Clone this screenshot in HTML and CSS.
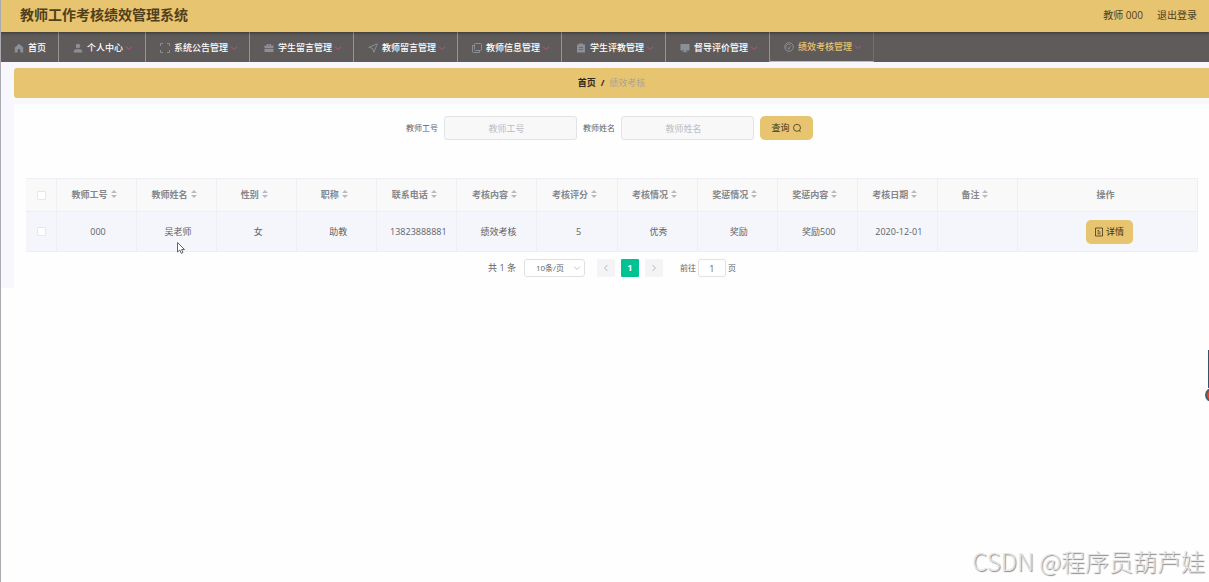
FILE: index.html
```html
<!DOCTYPE html>
<html lang="zh-CN">
<head>
<meta charset="utf-8">
<title>教师工作考核绩效管理系统</title>
<link rel="stylesheet" href="styles.css">
</head>
<body>
<svg class="sprite" aria-hidden="true">
  <symbol id="chevron" viewBox="0 0 10 10"><path d="M2 3.500 5 6.500 8 3.500" fill="none" stroke="currentColor"/></symbol>
  <symbol id="sort" viewBox="0 0 8 10"><path d="M4 1 7 4H1zM4 9 1 6h6z" fill="currentColor"/></symbol>
</svg>
<div class="app">
  <header class="topbar">
    <h1 class="title">教师工作考核绩效管理系统</h1>
    <div class="account"><span>教师 000</span><a href="#" class="logout">退出登录</a></div>
  </header>
  <nav class="nav">
    <a href="#" class="nav-item home"><svg class="icon" viewBox="0 0 10 10"><path d="M5 .8.8 4.600V9.500H3.700V6.300h2.600V9.500H9.200V4.600z" fill="currentColor"/></svg>首页</a>
    <a href="#" class="nav-item personal"><svg class="icon" viewBox="0 0 10 10"><circle cx="5" cy="3" r="2.300" fill="currentColor"/><path d="M.8 9.500V8Q1 6.200 3 6.200H7Q9 6.200 9.200 8V9.500z" fill="currentColor"/></svg>个人中心<svg class="arrow"><use href="#chevron"/></svg></a>
    <a href="#" class="nav-item"><svg class="icon" viewBox="0 0 10 10"><path d="M.5 3V.5H3M7 .5H9.500V3M9.500 7V9.500H7M3 9.500H.5V7" fill="none" stroke="currentColor"/></svg>系统公告管理<svg class="arrow"><use href="#chevron"/></svg></a>
    <a href="#" class="nav-item"><svg class="icon" viewBox="0 0 10 10"><path d="M.5 5V2.500H3V1H7V2.500H9.500V5zM4 2.500H6V1.800H4zM.5 5.800H9.500V9H.5z" fill="currentColor"/></svg>学生留言管理<svg class="arrow"><use href="#chevron"/></svg></a>
    <a href="#" class="nav-item"><svg class="icon" viewBox="0 0 10 10"><path d="M.8 4.300 9.300.8 5.800 9.300 4.600 5.400z" fill="none" stroke="currentColor"/></svg>教师留言管理<svg class="arrow"><use href="#chevron"/></svg></a>
    <a href="#" class="nav-item"><svg class="icon" viewBox="0 0 10 10"><rect x="2.500" y=".5" width="7" height="7" rx="1" fill="none" stroke="currentColor"/><path d="M2.500 2.500H.5V8.500Q.5 9.500 1.500 9.500H7.500V7.500" fill="none" stroke="currentColor"/></svg>教师信息管理<svg class="arrow"><use href="#chevron"/></svg></a>
    <a href="#" class="nav-item"><svg class="icon" viewBox="0 0 10 10"><path d="M1 1.500H3V.5H7V1.500H9V9.500H1z" fill="currentColor"/><path d="M3 4.500H7M3 6.500H7" stroke="#5e5b5a" stroke-width=".7"/></svg>学生评教管理<svg class="arrow"><use href="#chevron"/></svg></a>
    <a href="#" class="nav-item"><svg class="icon" viewBox="0 0 10 10"><path d="M.5 1H9.500V7.500H6V8.500H7.500V9.300H2.500V8.500H4V7.500H.5z" fill="currentColor"/></svg>督导评价管理<svg class="arrow"><use href="#chevron"/></svg></a>
    <a href="#" class="nav-item active" aria-current="page"><svg class="icon" viewBox="0 0 10 10"><circle cx="5" cy="5" r="4.300" fill="none" stroke="currentColor"/><path d="M2.500 6.500A2.700 2.700 0 0 1 6 2.600M5 6.500 7 3.500" fill="none" stroke="currentColor" stroke-width=".8"/><circle cx="4.800" cy="6.500" r=".9" fill="currentColor"/></svg>绩效考核管理<svg class="arrow"><use href="#chevron"/></svg></a>
  </nav>
  <main class="main">
    <div class="crumbs"><a href="#">首页</a><b>/</b><span>绩效考核</span></div>
    <section class="panel">
      <form class="search">
        <label for="no">教师工号</label><input id="no" type="text" placeholder="教师工号">
        <label for="name">教师姓名</label><input id="name" type="text" placeholder="教师姓名">
        <button type="button" class="btn query">查询<svg class="btn-icon" viewBox="0 0 10 10"><circle cx="5" cy="4.800" r="3.500" fill="none" stroke="currentColor" stroke-width=".8"/><path d="M7.300 7.500 8.500 9" stroke="currentColor" stroke-width=".8"/></svg></button>
      </form>
      <table class="grid">
        <colgroup><col class="c-check"><col span="12"><col class="c-action"></colgroup>
        <thead><tr>
          <th><input type="checkbox" aria-label="全选"></th>
          <th>教师工号<svg class="sort"><use href="#sort"/></svg></th>
          <th>教师姓名<svg class="sort"><use href="#sort"/></svg></th>
          <th>性别<svg class="sort"><use href="#sort"/></svg></th>
          <th>职称<svg class="sort"><use href="#sort"/></svg></th>
          <th>联系电话<svg class="sort"><use href="#sort"/></svg></th>
          <th>考核内容<svg class="sort"><use href="#sort"/></svg></th>
          <th>考核评分<svg class="sort"><use href="#sort"/></svg></th>
          <th>考核情况<svg class="sort"><use href="#sort"/></svg></th>
          <th>奖惩情况<svg class="sort"><use href="#sort"/></svg></th>
          <th>奖惩内容<svg class="sort"><use href="#sort"/></svg></th>
          <th>考核日期<svg class="sort"><use href="#sort"/></svg></th>
          <th>备注<svg class="sort"><use href="#sort"/></svg></th>
          <th>操作</th>
        </tr></thead>
        <tbody><tr>
          <td><input type="checkbox" aria-label="选择"></td>
          <td>000</td><td>吴老师</td><td>女</td><td>助教</td><td>13823888881</td><td>绩效考核</td><td>5</td><td>优秀</td><td>奖励</td><td>奖励500</td><td>2020-12-01</td><td></td>
          <td><button type="button" class="btn detail"><svg class="btn-icon" viewBox="0 0 10 10"><path d="M1.500 1H8.500V9H1.500zM3.500 3.500H5M3.500 5H6.500M3.500 6.800H6.500" fill="none" stroke="currentColor" stroke-width=".8"/></svg>详情</button></td>
        </tr></tbody>
      </table>
      <div class="pager">
        <span class="total">共 1 条</span>
        <span class="size"><select aria-label="每页条数"><option>10条/页</option></select><svg class="size-arrow"><use href="#chevron"/></svg></span>
        <span class="pages">
          <button type="button" aria-label="上一页" disabled><svg viewBox="0 0 10 10"><path d="M6.500 2 3.500 5 6.500 8" fill="none" stroke="currentColor"/></svg></button>
          <button type="button" class="current">1</button>
          <button type="button" aria-label="下一页" disabled><svg viewBox="0 0 10 10"><path d="M3.500 2 6.500 5 3.500 8" fill="none" stroke="currentColor"/></svg></button>
        </span>
        <label class="jump">前往<input type="text" value="1">页</label>
      </div>
    </section>
  </main>
  <svg class="cursor" viewBox="0 0 8 12"><path d="M.5.500V10L2.800 8 4.300 11.300 6 10.600 4.600 7.500H7.500z" fill="#fff" stroke="#555" stroke-width=".9"/></svg>
  <div class="widget"></div>
  <div class="watermark">CSDN @程序员葫芦娃</div>
</div>
</body>
</html>
```
FILE: styles.css
```css
* { box-sizing: border-box; }
body {
  margin: 0;
  background: #fefefe;
  color: #606266;
  font: 9px/12px "Open Sans", "Noto Sans CJK SC", sans-serif;
}
a { color: inherit; text-decoration: none; }
button, input, select { font: inherit; color: inherit; margin: 0; padding: 0; }
.sprite { display: none; }
svg { flex: none; }
.app {
  position: relative;
  min-height: 100vh;
  overflow: hidden;
  border-left: 1px solid #aaabb0;
}

.topbar {
  position: relative;
  display: flex;
  align-items: center;
  justify-content: space-between;
  height: 32px;
  margin-left: -1px;
  padding: 0 12px 2px 20px;
  background: #e7c470;
  box-shadow: 0 1px 3px rgba(0, 0, 0, .4);
  color: #50401c;
}
.title { margin: 0; font-size: 14px; line-height: 20px; font-weight: 700; }
.account { display: flex; gap: 14px; font-size: 10px; }

.nav {
  display: flex;
  height: 30px;
  margin-left: -1px;
  background: #5e5b5a;
  color: #fff;
}
.nav-item {
  display: flex;
  align-items: center;
  width: 104px;
  padding: 2px 0 0 14px;
  border-right: 1px solid #96948f;
  white-space: nowrap;
  font-weight: 500;
}
.nav-item.home { width: 59px; }
.nav-item.personal { width: 87px; }
.icon { width: 10px; height: 10px; margin-right: 4px; color: #8d8f96; }
.arrow { width: 10px; height: 10px; margin-left: 1px; color: #c2508e; }
.nav-item.active {
  padding-top: 1px;
  border-bottom: 1px solid #eab65c;
  border-right-color: #74716f;
  color: #e7c470;
}

.main { padding: 6px 0 0 13px; background: #f7f7fd; }
.crumbs {
  display: flex;
  align-items: center;
  justify-content: center;
  gap: 5px;
  height: 30px;
  border-radius: 3px 0 0 3px;
  background: #e7c470;
  color: #aaa596;
}
.crumbs a, .crumbs b { color: #302a1c; font-weight: 700; }
.panel { margin-top: 6px; padding: 12px 11px 11px 12px; background: #fefefe; }

.search {
  display: flex;
  align-items: center;
  justify-content: center;
  padding-right: 5px;
  font-size: 8px;
}
.search input {
  width: 133px;
  height: 24px;
  margin: 0 6px;
  padding-right: 8px;
  border: 1px solid #e3e3e6;
  border-radius: 3px;
  background: #f8f8f8;
  text-align: center;
  font-size: 9px;
}
.search input::placeholder { color: #bcbcc4; }
.btn {
  display: inline-flex;
  align-items: center;
  justify-content: center;
  gap: 2px;
  height: 24px;
  border: 0;
  border-radius: 5px;
  background: #e7c470;
  color: #40351b;
  font-size: 9px;
}
.btn-icon { width: 10px; height: 10px; }
.query { width: 53px; }
.detail { width: 47px; }

.grid {
  width: 100%;
  margin-top: 38px;
  table-layout: fixed;
  border-collapse: separate;
  border-spacing: 0;
}
.c-check { width: 31px; }
.c-action { width: 180px; }
.grid th, .grid td {
  padding: 0;
  border-right: 1px solid #eeeef4;
  border-bottom: 1px solid #eeeef4;
  text-align: center;
  vertical-align: middle;
}
.grid th {
  height: 34px;
  border-top: 1px solid #eeeef4;
  background: #f9f9f9;
  color: #85878d;
  font-weight: 700;
  padding-right: 4px;
}
.grid th:first-child { padding-right: 0; }
.grid td { height: 40px; padding-left: 3px; background: #f5f5fc; }
.grid td:first-child { padding-left: 0; }
.sort {
  width: 8px;
  height: 10px;
  margin: 0 0 2px 2px;
  vertical-align: middle;
  color: #b9bbc3;
}
.grid input {
  display: block;
  width: 9px;
  height: 9px;
  margin: 0 auto;
  appearance: none;
  border: 1px solid #e6e6eb;
  border-radius: 1px;
  background: #fff;
}

.pager {
  display: flex;
  align-items: center;
  justify-content: center;
  margin-top: 7px;
}
.total { margin-right: 8px; }
.size { position: relative; }
.size select {
  display: block;
  width: 61px;
  height: 18px;
  padding-left: 11px;
  appearance: none;
  border: 1px solid #dfe0e5;
  border-radius: 3px;
  background: #fff;
  font-size: 8px;
}
.size-arrow {
  position: absolute;
  right: 3px;
  top: 4px;
  width: 10px;
  height: 10px;
  color: #c3c5cc;
  pointer-events: none;
}
.pages { display: flex; gap: 6px; margin: 0 17px 0 12px; }
.pages button {
  display: flex;
  align-items: center;
  justify-content: center;
  width: 18px;
  height: 18px;
  border: 0;
  border-radius: 1px;
  background: #f4f4f6;
  color: #b5b7be;
}
.pages svg { width: 10px; height: 10px; }
.pages .current { background: #00c292; color: #fff; font-weight: 700; }
.jump { display: flex; align-items: center; gap: 2px; font-size: 8px; }
.jump input {
  width: 28px;
  height: 18px;
  border: 1px solid #e1e1e7;
  border-radius: 3px;
  background: #fff;
  text-align: center;
  font-size: 9px;
}

.cursor { position: absolute; left: 176px; top: 242px; width: 8px; height: 12px; }
.widget {
  position: absolute;
  right: 0;
  top: 350px;
  width: 1px;
  height: 38px;
  background: #36536a;
}
.widget::after {
  content: "";
  position: absolute;
  left: -3px;
  top: 38px;
  width: 10px;
  height: 10px;
  border: 2px solid #45606c;
  border-radius: 50%;
  background: #e9431e;
}
.watermark {
  position: absolute;
  right: 4px;
  bottom: 3px;
  color: #e4e4e4;
  font-family: "Noto Sans CJK SC", sans-serif;
  font-size: 24px;
  line-height: 36px;
  font-weight: 300;
  text-shadow: 1px 1px 1px #888;
}
```
